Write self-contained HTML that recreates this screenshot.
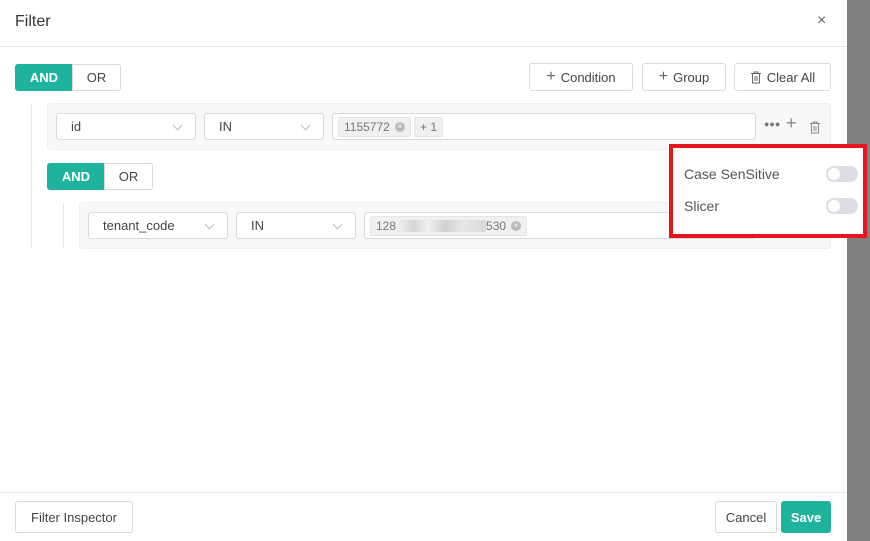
<!DOCTYPE html><html><head><style>
*{box-sizing:border-box;margin:0;padding:0}
body{width:870px;height:541px;overflow:hidden;background:#808080;font-family:"Liberation Sans",sans-serif;font-size:13px;color:#333;position:relative}
.m{position:absolute;left:0;top:0;width:847px;height:541px;background:#fff}
.a{position:absolute}
.btn{position:absolute;border:1px solid #d9d9d9;border-radius:3px;background:#fff;display:flex;align-items:center;justify-content:center;color:#444;font-size:13px}
.sel{position:absolute;border:1px solid #d9d9d9;border-radius:3px;background:#fff;height:27px;padding-left:14px;display:flex;align-items:center;color:#444}
.sel.c:after{content:"";position:absolute;right:14px;top:8px;width:6px;height:6px;border-right:1px solid #bbb;border-bottom:1px solid #bbb;transform:rotate(45deg)}
.tag{position:absolute;background:#f0f0f0;border:1px solid #e6e6e6;border-radius:2px;height:20px;top:3px;display:flex;align-items:center;padding:0 5px;color:#777;font-size:12px}
.x{display:inline-block;width:10px;height:10px;border-radius:50%;background:#bbb;margin-left:5px;color:#fff;font-size:8px;line-height:10px;text-align:center}
.tg{position:absolute;width:32px;height:16px;border-radius:8px;background:#dcdde2}
.tg:after{content:"";position:absolute;left:2px;top:2px;width:12px;height:12px;border-radius:50%;background:#fff}
svg{display:inline-block;vertical-align:middle}
</style></head><body>
<div class="m">
<div class="a" style="left:15px;top:13px;font-size:16px;color:#333">Filter</div>
<div class="a" style="left:817px;top:12px;font-size:16px;color:#666">×</div>
<div class="a" style="left:0;top:46px;width:847px;height:1px;background:#e8e8e8"></div>

<div class="btn" style="left:15px;top:64px;width:58px;height:27px;background:#1fb39e;border-color:#1fb39e;color:#fff;font-weight:bold;border-radius:3px 0 0 3px">AND</div>
<div class="btn" style="left:72px;top:64px;width:49px;height:27px;border-radius:0 3px 3px 0">OR</div>
<div class="btn" style="left:529px;top:63px;width:104px;height:28px"><span style="font-size:16px;margin-right:5px;color:#666">+</span>Condition</div>
<div class="btn" style="left:642px;top:63px;width:84px;height:28px"><span style="font-size:16px;margin-right:5px;color:#666">+</span>Group</div>
<div class="btn" style="left:734px;top:63px;width:97px;height:28px"><svg width="12" height="13" viewBox="0 0 12 13" style="margin-right:5px" fill="none" stroke="#666" stroke-width="1"><path d="M1 2.5h10M4 2.5V1h4v1.5M2.5 2.5v9.5h7V2.5M5 5v5M7 5v5"/></svg>Clear All</div>

<div class="a" style="left:31px;top:103px;width:1px;height:146px;background:#e5e5e5"></div>
<div class="a" style="left:47px;top:103px;width:784px;height:47px;background:#f8f8f8;border:1px solid #eee;border-radius:3px"></div>
<div class="sel c" style="left:56px;top:113px;width:140px">id</div>
<div class="sel c" style="left:204px;top:113px;width:120px">IN</div>
<div class="sel" style="left:332px;top:113px;width:424px;padding:0">
<div class="tag" style="left:5px">1155772<span class="x">×</span></div>
<div class="tag" style="left:81px">+ 1</div></div>
<div class="a" style="left:764px;top:119px;color:#777;font-size:9px;letter-spacing:0px">●●●</div>
<div class="a" style="left:786px;top:113px;color:#888;font-size:18px">+</div>
<div class="a" style="left:809px;top:119px"><svg width="12" height="13" viewBox="0 0 12 13" fill="none" stroke="#888" stroke-width="1"><path d="M1 2.5h10M4 2.5V1h4v1.5M2.5 2.5v9.5h7V2.5M5 5v5M7 5v5"/></svg></div>

<div class="btn" style="left:47px;top:163px;width:58px;height:27px;background:#1fb39e;border-color:#1fb39e;color:#fff;font-weight:bold;border-radius:3px 0 0 3px">AND</div>
<div class="btn" style="left:104px;top:163px;width:49px;height:27px;border-radius:0 3px 3px 0">OR</div>
<div class="a" style="left:63px;top:203px;width:1px;height:46px;background:#e5e5e5"></div>
<div class="a" style="left:79px;top:202px;width:752px;height:47px;background:#f8f8f8;border:1px solid #eee;border-radius:3px"></div>
<div class="sel c" style="left:88px;top:212px;width:140px">tenant_code</div>
<div class="sel c" style="left:236px;top:212px;width:120px">IN</div>
<div class="sel" style="left:364px;top:212px;width:392px;padding:0">
<div class="tag" style="left:5px">128<span style="display:inline-block;width:90px;height:12px;background:linear-gradient(90deg,#f2f2f2,#d5d5d5 20%,#f0f0f0 35%,#d0d0d0 55%,#e8e8e8 75%,#d8d8d8)"></span>530<span class="x">×</span></div></div>

<div class="a" style="left:669px;top:144px;width:198px;height:94px;border:4px solid #e3151e;background:#fff"></div>
<div class="a" style="left:684px;top:166px;font-size:14px;color:#555">Case SenSitive</div>
<div class="a" style="left:684px;top:198px;font-size:14px;color:#555">Slicer</div>
<div class="tg" style="left:826px;top:166px"></div>
<div class="tg" style="left:826px;top:198px"></div>

<div class="a" style="left:0;top:492px;width:847px;height:1px;background:#e8e8e8"></div>
<div class="btn" style="left:15px;top:501px;width:118px;height:32px">Filter Inspector</div>
<div class="btn" style="left:715px;top:501px;width:62px;height:32px">Cancel</div>
<div class="btn" style="left:781px;top:501px;width:50px;height:32px;background:#1fb39e;border-color:#1fb39e;color:#fff;font-weight:bold">Save</div>
</div>
</body></html>
